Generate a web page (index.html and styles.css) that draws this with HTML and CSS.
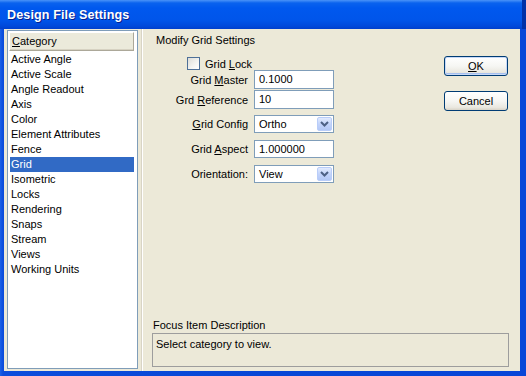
FILE: index.html
```html
<!DOCTYPE html>
<html>
<head>
<meta charset="utf-8">
<link rel="stylesheet" href="styles.css">
</head>
<body>
<div class="window">
  <div class="titlebar"><span class="title">Design File Settings</span></div>
  <div class="frame">
    <div class="client">
      <div class="left">
        <div class="list">
          <div class="list-head"><u>C</u>ategory</div>
          <div class="item">Active Angle</div>
          <div class="item">Active Scale</div>
          <div class="item">Angle Readout</div>
          <div class="item">Axis</div>
          <div class="item">Color</div>
          <div class="item">Element Attributes</div>
          <div class="item">Fence</div>
          <div class="item sel">Grid</div>
          <div class="item">Isometric</div>
          <div class="item">Locks</div>
          <div class="item">Rendering</div>
          <div class="item">Snaps</div>
          <div class="item">Stream</div>
          <div class="item">Views</div>
          <div class="item">Working Units</div>
        </div>
      </div>
      <div class="right">
        <div class="top">
          <div class="settings">
            <div class="group-title">Modify Grid Settings</div>
            <div class="row row-check">
              <span class="lab"></span>
              <span class="check"></span><span class="check-lab">Grid <u>L</u>ock</span>
            </div>
            <div class="row row-master">
              <span class="lab">Grid <u>M</u>aster</span>
              <span class="field">0.1000</span>
            </div>
            <div class="row row-ref">
              <span class="lab">Grd <u>R</u>eference</span>
              <span class="field">10</span>
            </div>
            <div class="row row-config">
              <span class="lab"><u>G</u>rid Config</span>
              <span class="combo"><span class="combo-text">Ortho</span><span class="drop"><svg width="9" height="6" viewBox="0 0 9 6"><path d="M1 1 L4.5 4.5 L8 1" fill="none" stroke="#4D6185" stroke-width="2"/></svg></span></span>
            </div>
            <div class="row row-aspect">
              <span class="lab">Grid <u>A</u>spect</span>
              <span class="field">1.000000</span>
            </div>
            <div class="row row-orient">
              <span class="lab">Orientation:</span>
              <span class="combo"><span class="combo-text">View</span><span class="drop"><svg width="9" height="6" viewBox="0 0 9 6"><path d="M1 1 L4.5 4.5 L8 1" fill="none" stroke="#4D6185" stroke-width="2"/></svg></span></span>
            </div>
          </div>
          <div class="buttons">
            <div class="btn default"><u>O</u>K</div>
            <div class="btn">Cancel</div>
          </div>
        </div>
        <div class="desc">
          <div class="desc-label">Focus Item Description</div>
          <div class="desc-box">Select category to view.</div>
        </div>
      </div>
    </div>
  </div>
</div>
</body>
</html>
```
FILE: styles.css
```css
html, body {
  margin: 0;
  padding: 0;
  background: #000;
}
body {
  font-family: "Liberation Sans", Arial, sans-serif;
  font-size: 11px;
  color: #000;
}
u { text-decoration: underline; text-underline-offset: 1px; }
.window {
  width: 526px;
  height: 376px;
  display: flex;
  flex-direction: column;
  background: #0846D8;
  overflow: hidden;
}
.titlebar {
  height: 29px;
  flex: none;
  display: flex;
  align-items: center;
  padding-left: 7px;
  background: linear-gradient(to bottom, #4A93F8 0px, #0A62EE 3px, #0058EE 8px, #0055EA 20px, #0049DB 26px, #003FCC 29px);
  border-right: 4px solid #0030A8;
  box-sizing: border-box;
}
.title {
  color: #fff;
  font-weight: bold;
  font-size: 12.6px;
  letter-spacing: 0.1px;
  text-shadow: 1px 1px 0 #0A1E8C;
  margin-top: 1px;
}
.frame {
  flex: 1;
  display: flex;
  padding: 0 6px 5px 4px;
  background: linear-gradient(to right, #1A62E8 0, #0B4DDC 3px, #0847D6 50%, #0846D8 100%);
  min-height: 0;
}
.client {
  flex: 1;
  display: flex;
  background: #ECE9D8;
  min-height: 0;
}
.left {
  width: 138px;
  flex: none;
  padding: 1px 0 2px 3px;
  box-sizing: border-box;
  display: flex;
  border-right: 1px solid #D8D4C6;
}
.list {
  width: 131px;
  background: #fff;
  border: 1px solid #7F9DB9;
  box-sizing: border-box;
  padding-top: 1px;
}
.list-head {
  height: 19px;
  margin: 0 3px 1px 1px;
  box-sizing: border-box;
  background: #EBEADB;
  border: 1px solid;
  border-color: #FFFFFF #ACA899 #ACA899 #FFFFFF;
  box-shadow: inset 0 -1px 0 #D6D2C2;
  padding-left: 2px;
  line-height: 17px;
}
.item {
  height: 15px;
  line-height: 15px;
  margin: 0 3px 0 2px;
  padding-left: 1px;
  white-space: nowrap;
}
.item.sel {
  background: #316AC5;
  color: #fff;
}
.right {
  flex: 1;
  display: flex;
  flex-direction: column;
  border-left: 1px solid #FFFFFF;
  min-width: 0;
}
.top {
  flex: 1;
  display: flex;
}
.settings {
  width: 300px;
  padding-top: 4px;
  padding-left: 13px;
  box-sizing: border-box;
}
.group-title {
  height: 14px;
  line-height: 14px;
}
.row {
  display: flex;
  align-items: center;
}
.lab {
  width: 92px;
  flex: none;
  text-align: right;
  margin-right: 6px;
  white-space: nowrap;
}
.row-check { margin-top: 10px; height: 13px; }
.row-check .lab { width: 31px; margin-right: 0; }
.check {
  width: 13px;
  height: 13px;
  box-sizing: border-box;
  border: 1px solid #4E7098;
  background: linear-gradient(135deg, #DCDCD7 0%, #F4F4F1 60%, #FFFFFF 100%);
}
.check-lab { margin-left: 5px; }
.row-master { margin-top: 0; }
.row-ref { margin-top: 1px; }
.row-config { margin-top: 6px; }
.row-aspect { margin-top: 7px; }
.row-orient { margin-top: 7px; }
.field {
  width: 80px;
  height: 19px;
  box-sizing: border-box;
  border: 1px solid #7F9DB9;
  background: #fff;
  padding-left: 4px;
  line-height: 17px;
}
.row-aspect .field { height: 18px; line-height: 16px; }
.combo {
  width: 80px;
  height: 18px;
  box-sizing: border-box;
  border: 1px solid #7F9DB9;
  background: #fff;
  display: flex;
  align-items: stretch;
  padding: 1px;
}
.combo-text {
  flex: 1;
  padding-left: 3px;
  line-height: 14px;
}
.drop {
  width: 15px;
  box-sizing: border-box;
  border: 1px solid #B9CDF9;
  border-radius: 2px;
  background: linear-gradient(to bottom, #E2EBFE 0%, #C3D4FB 50%, #B3C8F6 100%);
  display: flex;
  align-items: center;
  justify-content: center;
}
.buttons {
  flex: 1;
  display: flex;
  flex-direction: column;
  align-items: flex-end;
  padding-top: 27px;
  padding-right: 12px;
  gap: 15px;
}
.btn {
  width: 64px;
  height: 20px;
  box-sizing: border-box;
  border: 1px solid #003C74;
  border-radius: 3px;
  background: linear-gradient(to bottom, #FFFFFF 0%, #F6F6F3 50%, #EAE8E0 85%, #D8D3C7 100%);
  text-align: center;
  line-height: 18px;
}
.btn.default {
  box-shadow: inset 0 0 0 1px #C8D9F7, inset 0 -1px 0 1px #A5BFEF;
}
.desc {
  flex: none;
  padding: 0 11px 4px 9px;
}
.desc-label {
  height: 14px;
  line-height: 14px;
  margin-left: 1px;
  margin-bottom: 1px;
}
.desc-box {
  height: 34px;
  box-sizing: border-box;
  border: 1px solid #9D9D9D;
  padding: 3px 3px;
  line-height: 14px;
}
```
